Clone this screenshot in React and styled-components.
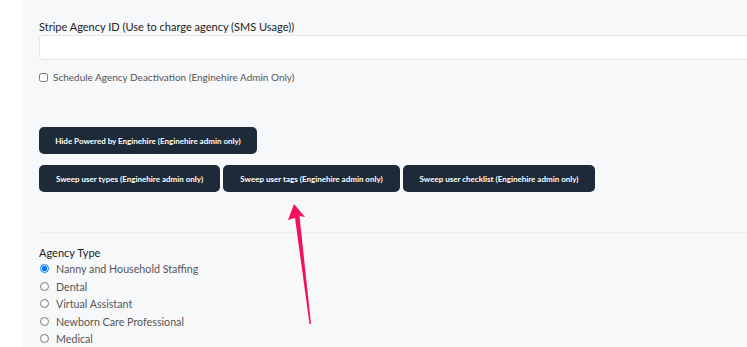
import React from 'react'
import styled, { createGlobalStyle } from 'styled-components'

const GlobalStyle = createGlobalStyle`
  html, body {
    margin: 0;
    padding: 0;
    background: #ffffff;
    overflow: hidden;
  }
  body {
    font-family: Lato, "Noto Sans", sans-serif;
  }
`

const adminButtons = [
  ['Sweep user types (Enginehire admin only)', 181],
  ['Sweep user tags (Enginehire admin only)', 177],
  ['Sweep user checklist (Enginehire admin only)', 192]
]

const agencyTypes = [
  'Nanny and Household Staffing',
  'Dental',
  'Virtual Assistant',
  'Newborn Care Professional',
  'Medical'
]

const App = () => {
  return (
    <Page>
      <GlobalStyle />
      <Panel>
        <FieldLabel>Stripe Agency ID (Use to charge agency (SMS Usage))</FieldLabel>
        <TextInput type='text' />
        <CheckRow>
          <Check type='checkbox' />
          <span>Schedule Agency Deactivation (Enginehire Admin Only)</span>
        </CheckRow>

        <ButtonRow first>
          <AdminButton style={{ width: 218 }}>Hide Powered by Enginehire (Enginehire admin only)</AdminButton>
        </ButtonRow>
        <ButtonRow>
          {adminButtons.map(([text, w]) => (
            <AdminButton key={text} style={{ width: w }}>{text}</AdminButton>
          ))}
        </ButtonRow>

        <Divider />

        <GroupLabel>Agency Type</GroupLabel>
        <RadioList>
          {agencyTypes.map((type, i) => (
            <RadioRow key={type}>
              <Radio type='radio' name='agencyType' defaultChecked={i === 0} />
              <span>{type}</span>
            </RadioRow>
          ))}
        </RadioList>
      </Panel>

      <Arrow width='40' height='130' viewBox='0 0 40 130'>
        <polygon
          fill='#f2115a'
          points='12,1 23,14 17.5,13 29,121 27.5,121 13,15 6,17'
        />
      </Arrow>
    </Page>
  )
}

const Page = styled.div`
  position: relative;
  width: 747px;
  height: 347px;
  overflow: hidden;
  padding-left: 23px;
  box-sizing: border-box;
`
const Panel = styled.div`
  width: 760px;
  height: 347px;
  background: #f7f8fa;
  padding: 19px 0 0 16px;
  box-sizing: border-box;
`
const FieldLabel = styled.div`
  font-size: 11px;
  color: #222;
  line-height: 15px;
  margin-bottom: 1px;
`
const TextInput = styled.input`
  display: block;
  width: 720px;
  height: 25px;
  box-sizing: border-box;
  border: 1px solid #e2e4e8;
  border-radius: 4px;
  background: #fff;
  outline: none;
`
const CheckRow = styled.label`
  display: flex;
  align-items: center;
  gap: 5px;
  margin-top: 9px;
  font-size: 10px;
  color: #555;
  line-height: 16px;
`
const Check = styled.input`
  width: 9px;
  height: 9px;
  margin: 0;
`
const ButtonRow = styled.div`
  display: flex;
  gap: 3px;
  margin-top: ${p => (p.first ? '42px' : '11px')};
`
const AdminButton = styled.button`
  height: 27px;
  box-sizing: border-box;
  padding: 0;
  border: none;
  border-radius: 5px;
  background: #1e2a38;
  color: #fff;
  font-family: Lato, "Noto Sans", sans-serif;
  font-weight: 700;
  font-size: 8px;
  text-align: center;
`
const Divider = styled.div`
  width: 720px;
  height: 1px;
  background: #eceef1;
  margin-top: 40px;
`
const GroupLabel = styled.div`
  font-size: 11px;
  color: #222;
  margin-top: 12px;
  line-height: 15px;
`
const RadioList = styled.div`
  display: flex;
  flex-direction: column;
`
const RadioRow = styled.label`
  display: flex;
  align-items: center;
  gap: 7px;
  height: 17.5px;
  font-size: 10.7px;
  color: #555;
`
const Radio = styled.input`
  width: 9px;
  height: 9px;
  margin: 0 0 0 1px;
`
const Arrow = styled.svg`
  position: absolute;
  left: 282px;
  top: 203px;
`

export default App
